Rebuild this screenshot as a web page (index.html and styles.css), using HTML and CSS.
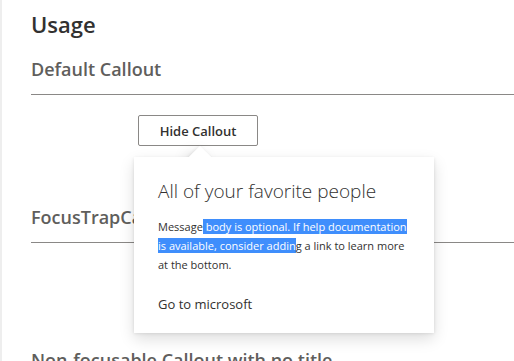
FILE: index.html
```html
<!DOCTYPE html>
<html>
<head>
<meta charset="utf-8">
<link rel="stylesheet" href="styles.css">
</head>
<body>
<div class="page">
  <h1 class="title">Usage</h1>
  <section class="example">
    <h2 class="example-head">Default Callout</h2>
    <div class="demo">
      <button class="btn">Hide Callout</button>
    </div>
  </section>
  <section class="example">
    <h2 class="example-head">FocusTrapCallout</h2>
    <div class="demo demo-tall"></div>
  </section>
  <section class="example">
    <h2 class="example-head">Non-focusable Callout with no title</h2>
  </section>

  <div class="callout">
    <div class="beak"></div>
    <div class="callout-inner">
      <div class="callout-title">All of your favorite people</div>
      <p class="callout-body">Message<span class="sel"> body is optional. If help documentation</span><br><span class="sel">is available, consider addin</span>g a link to learn more<br>at the bottom.</p>
      <a class="callout-link">Go to microsoft</a>
    </div>
  </div>
</div>
</body>
</html>
```

FILE: styles.css
```css
html, body {
  margin: 0;
  padding: 0;
  background: #ffffff;
  overflow: hidden;
}
body {
  font-family: "Open Sans", "Noto Sans", sans-serif;
  color: #323130;
  width: 514px;
  height: 361px;
}
.page {
  position: relative;
  border-left: 2px solid #eeeeee;
  padding: 6px 0 0 29px;
  height: 361px;
  box-sizing: border-box;
  overflow: hidden;
}
.title {
  margin: 0;
  font-size: 22px;
  font-weight: 600;
  line-height: 36px;
  color: #323130;
}
.example-head {
  margin: 0;
  font-size: 18px;
  font-weight: 600;
  color: #605e5c;
  line-height: 26px;
  padding: 14px 0 12px;
  border-bottom: 1px solid #8a8886;
  white-space: nowrap;
}
.demo {
  padding: 20px 0 0 107px;
  height: 95px;
  box-sizing: border-box;
}
.demo-tall {
  height: 90px;
}
.btn {
  font-family: inherit;
  width: 120px;
  height: 31px;
  border: 1px solid #8a8886;
  border-radius: 2px;
  background: #ffffff;
  color: #323130;
  font-size: 13px;
  font-weight: 600;
  padding: 0;
}
.callout {
  position: absolute;
  left: 132px;
  top: 157px;
  width: 300px;
  background: #ffffff;
  box-shadow: 0 6.4px 14.4px 0 rgba(0,0,0,0.132), 0 1.2px 3.6px 0 rgba(0,0,0,0.108);
}
.beak {
  position: absolute;
  left: 58px;
  top: -8px;
  width: 16px;
  height: 16px;
  background: #ffffff;
  transform: rotate(45deg);
  box-shadow: inherit;
}
.callout-inner {
  position: relative;
  background: #ffffff;
  padding: 20px 24px 19px 24px;
}
.callout-title {
  font-size: 19px;
  font-weight: 300;
  line-height: 28px;
  color: #323130;
  margin-bottom: 12px;
}
.callout-body {
  margin: 0 0 20px;
  font-size: 11px;
  line-height: 19px;
  color: #323130;
}
.sel {
  background: #3f8efc;
  color: #ffffff;
}
.callout-link {
  display: block;
  font-size: 13px;
  line-height: 20px;
  color: #323130;
}
```
